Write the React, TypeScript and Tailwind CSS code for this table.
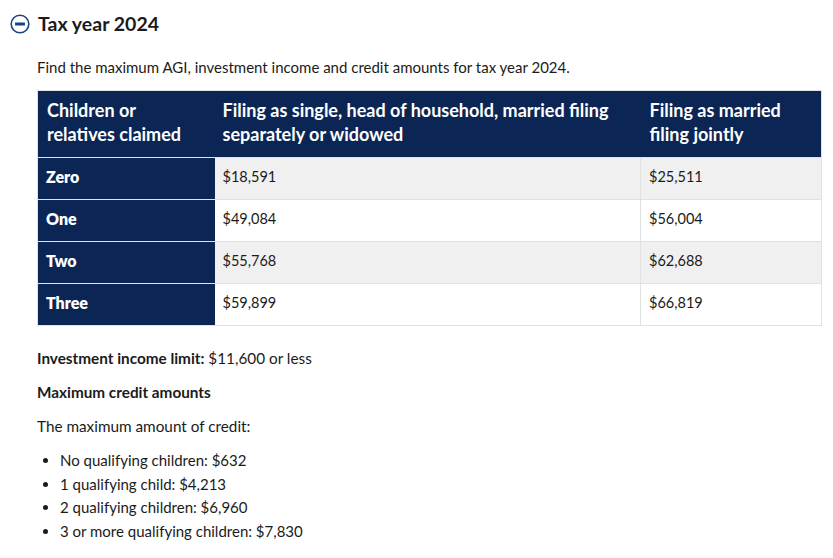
const rows = [
  { label: "Zero", single: "$18,591", joint: "$25,511" },
  { label: "One", single: "$49,084", joint: "$56,004" },
  { label: "Two", single: "$55,768", joint: "$62,688" },
  { label: "Three", single: "$59,899", joint: "$66,819" },
];

const credits = [
  "No qualifying children: $632",
  "1 qualifying child: $4,213",
  "2 qualifying children: $6,960",
  "3 or more qualifying children: $7,830",
];

function MinusCircle() {
  return (
    <svg width="20" height="20" viewBox="0 0 20 20" className="shrink-0">
      <circle cx="10" cy="10" r="8.8" fill="none" stroke="#1a4480" strokeWidth="1.6" />
      <rect x="5" y="8.6" width="10" height="2.8" rx="0.6" fill="#1a4480" />
    </svg>
  );
}

export default function App() {
  return (
    <div
      className="w-[833px] h-[558px] bg-white text-[#1b1b1b] overflow-hidden"
      style={{ fontFamily: "Lato, 'Noto Sans', sans-serif" }}
    >
      <div className="flex items-center gap-[8px] pl-[10px] pt-[12px]">
        <MinusCircle />
        <h2 className="text-[19.5px] font-bold leading-[24px]">Tax year 2024</h2>
      </div>

      <div className="pl-[37px] pr-[11px]">
        <p className="mt-[19px] text-[15px] leading-[24px]">
          Find the maximum AGI, investment income and credit amounts for tax year 2024.
        </p>

        <table className="mt-[11px] w-full border-collapse border border-[#dfe1e2]">
          <thead>
            <tr className="h-[67px] bg-[#0b2655] text-white text-[18px] font-bold leading-[24px] align-top">
              <th className="w-[177px] px-[9px] pt-[7px] text-left border-b border-[#dfe1e2]">
                Children or
                <br />
                relatives claimed
              </th>
              <th className="w-[426px] px-[8px] pt-[7px] text-left border-b border-[#dfe1e2]">
                Filing as single, head of household, married filing
                <br />
                separately or widowed
              </th>
              <th className="px-[9px] pt-[7px] text-left border-b border-[#dfe1e2]">
                Filing as married
                <br />
                filing jointly
              </th>
            </tr>
          </thead>
          <tbody>
            {rows.map((r, i) => (
              <tr
                key={r.label}
                className={`h-[42px] border-b border-[#dfe1e2] ${i % 2 === 0 ? "bg-[#f0f0f0]" : "bg-white"}`}
              >
                <th className="bg-[#0b2655] text-white text-[16px] font-extrabold text-left px-[8px] pb-[3px]">
                  {r.label}
                </th>
                <td className="px-[8px] pb-[3px] text-[14.5px]">{r.single}</td>
                <td className="px-[8px] pb-[3px] text-[14.5px] border-l border-[#dfe1e2]">{r.joint}</td>
              </tr>
            ))}
          </tbody>
        </table>

        <p className="mt-[21px] text-[15.3px] leading-[22px]">
          <span className="font-bold">Investment income limit:</span> $11,600 or less
        </p>
        <p className="mt-[12px] text-[15.3px] leading-[22px] font-bold">Maximum credit amounts</p>
        <p className="mt-[12px] text-[15.3px] leading-[22px]">The maximum amount of credit:</p>
        <ul className="mt-[12px] pl-[23px] list-disc text-[15px] leading-[23.7px]">
          {credits.map((c) => (
            <li key={c}>{c}</li>
          ))}
        </ul>
      </div>
    </div>
  );
}
